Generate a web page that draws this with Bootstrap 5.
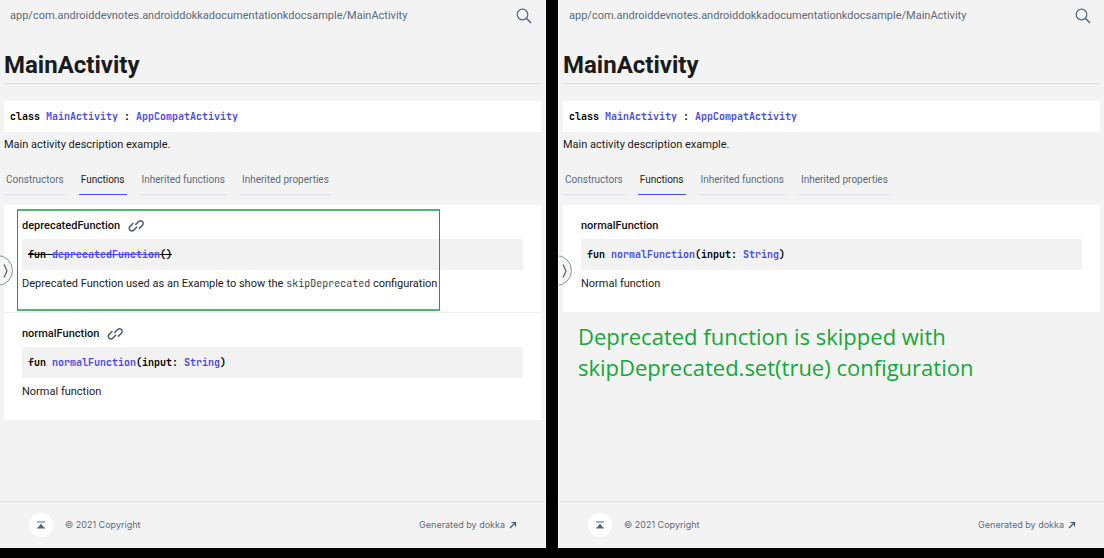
<!DOCTYPE html>
<html lang="en">
<head>
<meta charset="utf-8">
<meta name="viewport" content="width=device-width, initial-scale=1">
<title>MainActivity</title>
<link href="https://cdn.jsdelivr.net/npm/bootstrap@5.3.0/dist/css/bootstrap.min.css" rel="stylesheet">
<style>
body { background: #000; color: #1b1b1d; font-family: Roboto, "Liberation Sans", sans-serif; font-size: 11px; line-height: 18px; }
a { color: #4b4be8; text-decoration: none; }
button { font: inherit; color: inherit; }
.panes { gap: 12px; padding-bottom: 10px; }
.doc-pane { flex: 1 1 0; min-width: 0; background: #f3f3f3; border: 0 solid #fff; overflow: hidden; }
.pane-before { border-right-width: 1px; }
.pane-after { border-left-width: 1px; }
.doc-main { padding: 0 4px; }
.crumbs { height: 32px; padding: 0 9px 0 6px; color: #5b6b7b; }
.doc-title { font-size: 24px; line-height: 34px; font-weight: 700; margin: 16px 0 17px; padding-bottom: 1px; border-bottom: 1px solid #dcdde0; }
.sig { font: 700 10px/31px "JetBrains Mono", "DejaVu Sans Mono", monospace; color: #000; padding: 0 6px; white-space: pre; }
.sig code { font-family: inherit; font-size: inherit; color: inherit; }
.inline-code { font: 10px/10px "JetBrains Mono", "DejaVu Sans Mono", monospace; color: #3c3c40; }
.struck span, .struck a { text-decoration: line-through; }
.summary { margin: 4px 0 0; }
.doc-tabs { gap: 13px; margin: 11px 0 10px; font-size: 10px; color: #5b6b7b; }
.doc-tabs button { border: 0; border-bottom: 1px solid #dfe0ec; background: none; padding: 6px 2px 5px; }
.doc-tabs .active { color: #1b1b1d; border-bottom-color: #4b4be8; }
.member { padding: 11px 18px 19px; }
.member + .member { border-top: 1px solid #f0f0f0; }
.member h2 { font-size: 11px; line-height: 20px; font-weight: 500; margin: 0 0 3px; color: #111; gap: 7px; }
.member .sig { background: #f2f2f2; }
.member p { margin: 5px 0 0; }
.outline-note { position: absolute; inset: 4px 101px 1px 13px; border: solid #4cba6e; border-width: 2px 1px; border-left-color: #14a03a; border-right-color: #14a03a; pointer-events: none; }
.caption-note { font: 22px/31px "Open Sans", "Noto Sans", sans-serif; color: #14a838; margin: 9px 0 0 15px; }
.nav-toggle { position: absolute; top: 255px; left: -18px; width: 31px; height: 31px; border: 1px solid #8a94a3; border-radius: 50%; background: #f5f5f5; padding: 0; text-align: right; line-height: 0; }
.doc-foot { border-top: 1px solid #dcdde0; height: 47px; padding: 0 28px 0 29px; font-family: Inter, sans-serif; font-size: 9px; color: #5b6b7b; }
.to-top { width: 24px; height: 24px; border: 0; border-radius: 50%; background: #fff; padding: 0; margin-right: 12px; }
.doc-foot a { color: inherit; gap: 4px; }
</style>
</head>
<body>
<svg class="d-none">
  <symbol id="search" viewBox="0 0 16 16"><circle cx="6.5" cy="6.5" r="5.3" fill="none" stroke="#52657a" stroke-width="1.2"/><path d="M10.3 10.3L15 15" stroke="#52657a" stroke-width="1.5"/></symbol>
  <symbol id="chain" viewBox="0 0 24 24"><path fill="#52606f" d="M21.25 5.300C20.350 4.500 19.250 4 18.050 4C16.850 4 15.650 4.500 14.850 5.300L10.350 9.800L11.750 11.200L16.250 6.700C17.250 5.700 18.850 5.700 19.850 6.700C20.850 7.700 20.850 9.300 19.850 10.300L15.350 14.800L16.750 16.200L21.250 11.700C22.150 10.800 22.550 9.700 22.550 8.500C22.550 7.300 22.150 6.200 21.250 5.300ZM8.350 16.800C7.350 17.800 5.750 17.800 4.750 16.800C3.750 15.800 3.750 14.200 4.750 13.200L9.250 8.700L7.850 7.300L3.350 11.800C1.550 13.500 1.550 16.400 3.350 18.200C5.050 20 7.950 20 9.750 18.200L14.250 13.700L12.850 12.300Z"/></symbol>
  <symbol id="top" viewBox="0 0 10 8"><path d="M1 0.500H9V1.500H1zM5 2.500L8 6.500H2zM1 6.500H9V7.500H1z" fill="#52657a"/></symbol>
  <symbol id="out" viewBox="0 0 8 8"><path d="M1 7L6 2M2.500 1.500H6.500V5.500" fill="none" stroke="#42566c" stroke-width="1.200"/></symbol>
  <symbol id="angle" viewBox="0 0 5 14"><path d="M1 .5L4 7L1 13.500" fill="none" stroke="#52606f" stroke-width="1.200"/></symbol>
</svg>
<div class="panes d-flex min-vh-100">
  <section class="doc-pane pane-before position-relative d-flex flex-column">
    <div class="doc-main flex-grow-1">
      <header class="crumbs d-flex align-items-center justify-content-between"><span>app/com.androiddevnotes.androiddokkadocumentationkdocsample/MainActivity</span>
        <button class="border-0 bg-transparent p-0 d-flex" aria-label="Search"><svg width="16" height="16"><use href="#search"/></svg></button></header>
      <h1 class="doc-title">MainActivity</h1>
      <div class="sig bg-white"><code>class <a href="#">MainActivity</a> : <a href="#">AppCompatActivity</a></code></div>
      <p class="summary">Main activity description example.</p>
      <div class="doc-tabs d-flex"><button>Constructors</button><button class="active">Functions</button><button>Inherited functions</button><button>Inherited properties</button></div>
      <div class="bg-white">
        <article class="member position-relative">
          <h2 class="d-flex align-items-center">deprecatedFunction <svg width="18" height="18"><use href="#chain"/></svg></h2>
          <div class="sig"><s class="struck text-decoration-none"><code><span>fun </span><a href="#">deprecatedFunction</a><span>()</span></code></s></div>
          <p>Deprecated Function used as an Example to show the <code class="inline-code">skipDeprecated</code> configuration</p>
          <div class="outline-note"></div>
        </article>
        <article class="member">
          <h2 class="d-flex align-items-center">normalFunction <svg width="18" height="18"><use href="#chain"/></svg></h2>
          <div class="sig"><code>fun <a href="#">normalFunction</a>(input: <a href="#">String</a>)</code></div>
          <p>Normal function</p>
        </article>
      </div>
    </div>
    <footer class="doc-foot d-flex align-items-center"><button class="to-top d-flex align-items-center justify-content-center" aria-label="Back to top"><svg width="10" height="8"><use href="#top"/></svg></button><span>© 2021 Copyright</span><a href="#" class="ms-auto d-flex align-items-center">Generated by dokka <svg width="8" height="8"><use href="#out"/></svg></a></footer>
    <button class="nav-toggle" aria-label="Open navigation"><svg width="5" height="14" class="me-1"><use href="#angle"/></svg></button>
  </section>
  <section class="doc-pane pane-after position-relative d-flex flex-column">
    <div class="doc-main flex-grow-1">
      <header class="crumbs d-flex align-items-center justify-content-between"><span>app/com.androiddevnotes.androiddokkadocumentationkdocsample/MainActivity</span>
        <button class="border-0 bg-transparent p-0 d-flex" aria-label="Search"><svg width="16" height="16"><use href="#search"/></svg></button></header>
      <h1 class="doc-title">MainActivity</h1>
      <div class="sig bg-white"><code>class <a href="#">MainActivity</a> : <a href="#">AppCompatActivity</a></code></div>
      <p class="summary">Main activity description example.</p>
      <div class="doc-tabs d-flex"><button>Constructors</button><button class="active">Functions</button><button>Inherited functions</button><button>Inherited properties</button></div>
      <div class="bg-white">
        <article class="member">
          <h2>normalFunction</h2>
          <div class="sig"><code>fun <a href="#">normalFunction</a>(input: <a href="#">String</a>)</code></div>
          <p>Normal function</p>
        </article>
      </div>
      <p class="caption-note">Deprecated function is skipped with<br>skipDeprecated.set(true) configuration</p>
    </div>
    <footer class="doc-foot d-flex align-items-center"><button class="to-top d-flex align-items-center justify-content-center" aria-label="Back to top"><svg width="10" height="8"><use href="#top"/></svg></button><span>© 2021 Copyright</span><a href="#" class="ms-auto d-flex align-items-center">Generated by dokka <svg width="8" height="8"><use href="#out"/></svg></a></footer>
    <button class="nav-toggle" aria-label="Open navigation"><svg width="5" height="14" class="me-1"><use href="#angle"/></svg></button>
  </section>
</div>
<script src="https://cdn.jsdelivr.net/npm/bootstrap@5.3.0/dist/js/bootstrap.bundle.min.js"></script>
</body>
</html>
